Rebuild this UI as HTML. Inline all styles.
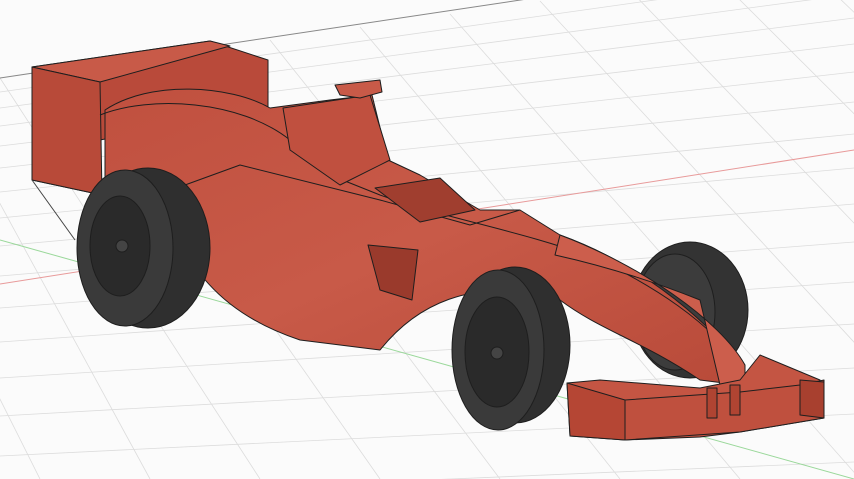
<!DOCTYPE html>
<html><head><style>
html,body{margin:0;padding:0;background:#fafafa;overflow:hidden;width:854px;height:479px}
svg{display:block}
</style></head><body>
<svg width="854" height="479" viewBox="0 0 854 479" xmlns="http://www.w3.org/2000/svg">
<defs>
<linearGradient id="bg" x1="0" y1="0" x2="1" y2="1">
<stop offset="0" stop-color="#c0503f"/><stop offset="0.5" stop-color="#c85a48"/><stop offset="1" stop-color="#b84a39"/>
</linearGradient>
</defs>
<rect width="854" height="479" fill="#fbfbfb"/>
<g stroke="#dcdcdc" stroke-width="0.8" fill="none">
<line x1="0" y1="92" x2="854" y2="-28"/>
<line x1="0" y1="108" x2="854" y2="-6"/>
<line x1="0" y1="126" x2="854" y2="18"/>
<line x1="0" y1="146" x2="854" y2="44"/>
<line x1="0" y1="168" x2="854" y2="72"/>
<line x1="0" y1="192" x2="854" y2="102"/>
<line x1="0" y1="218" x2="854" y2="134"/>
<line x1="0" y1="246" x2="854" y2="168"/>
<line x1="0" y1="276" x2="854" y2="204"/>
<line x1="0" y1="308" x2="854" y2="242"/>
<line x1="0" y1="342" x2="854" y2="282"/>
<line x1="0" y1="378" x2="854" y2="324"/>
<line x1="0" y1="416" x2="854" y2="368"/>
<line x1="0" y1="456" x2="854" y2="414"/>
<line x1="0" y1="498" x2="854" y2="462"/>
<line x1="-300" y1="0" x2="-60" y2="479"/>
<line x1="-200" y1="0" x2="40" y2="479"/>
<line x1="-100" y1="20" x2="150" y2="479"/>
<line x1="0" y1="78" x2="260" y2="479"/>
<line x1="90" y1="65" x2="380" y2="479"/>
<line x1="180" y1="52" x2="500" y2="479"/>
<line x1="270" y1="40" x2="620" y2="479"/>
<line x1="360" y1="27" x2="740" y2="479"/>
<line x1="450" y1="14" x2="860" y2="479"/>
<line x1="540" y1="1" x2="980" y2="479"/>
<line x1="630" y1="-10" x2="1100" y2="479"/>
<line x1="720" y1="-20" x2="1220" y2="479"/>
<line x1="810" y1="-30" x2="1340" y2="479"/>
</g>
<line x1="0" y1="78" x2="854" y2="-50" stroke="#888" stroke-width="1"/>
<line x1="0" y1="284" x2="854" y2="150" stroke="#e89a9a" stroke-width="1"/>
<line x1="0" y1="240" x2="854" y2="479" stroke="#9ad89a" stroke-width="1"/>

<g stroke="#1e1e1e" stroke-width="1" stroke-linejoin="round">
<!-- rear wing -->
<polygon points="32,67 210,41 268,60 268,108 100,140 102,195 32,180" fill="#b94a3a"/>
<polygon points="32,67 210,41 230,46 100,82" fill="#c85a48"/>
<polygon points="32,67 100,82 102,195 32,180" fill="#b84a39"/>
<line x1="32" y1="180" x2="75" y2="240" stroke="#444"/>
<!-- right far wheel -->
<ellipse cx="690" cy="310" rx="58" ry="68" fill="#333"/>
<ellipse cx="675" cy="312" rx="40" ry="58" fill="#3c3c3c"/>
<!-- body -->
<path d="M105,200 L105,110 C150,80 230,85 270,108 L330,100 L372,95 L388,160 L420,175 L480,210 L520,210 L560,235 C630,260 700,310 745,370 L740,385 L700,380 C640,340 600,330 560,300 L540,290 C470,285 420,300 380,350 L300,340 C240,320 210,290 190,260 C160,230 130,210 105,200 Z" fill="url(#bg)"/>
<path d="M100,115 C150,95 240,100 290,140 L330,175 L380,195 C450,220 520,230 600,260 C650,285 710,320 745,372" fill="none"/>
<path d="M130,205 L240,165 L380,200 L470,225 L520,210" fill="none"/>
<!-- halo/roll hoop -->
<polygon points="283,108 370,95 390,160 340,185 290,150" fill="#c0503f"/>
<polygon points="335,85 380,80 382,92 360,98 340,95" fill="#c85a48"/>
<!-- cockpit -->
<polygon points="375,188 440,178 475,210 420,222" fill="#a03e2f"/>
<!-- sidepod inlet -->
<polygon points="368,245 418,250 412,300 380,290" fill="#9a3a2c"/>
<!-- nose -->
<path d="M560,235 C640,265 720,320 745,365 L745,385 L720,385 L700,300 C650,280 600,265 555,255 Z" fill="#cc5e4c"/>
<!-- rear wheel -->
<ellipse cx="148" cy="248" rx="62" ry="80" fill="#2f2f2f"/>
<ellipse cx="125" cy="248" rx="48" ry="78" fill="#3a3a3a"/>
<ellipse cx="120" cy="246" rx="30" ry="50" fill="#2a2a2a"/>
<circle cx="122" cy="246" r="6" fill="#444"/>
<!-- front wheel -->
<ellipse cx="515" cy="345" rx="55" ry="78" fill="#2f2f2f"/>
<ellipse cx="498" cy="350" rx="46" ry="80" fill="#3a3a3a"/>
<ellipse cx="497" cy="352" rx="32" ry="55" fill="#2a2a2a"/>
<circle cx="497" cy="353" r="6" fill="#444"/>
<!-- front wing -->
<polygon points="567,383 600,380 700,388 740,380 760,355 820,380 824,418 740,432 700,437 625,440 570,436" fill="#c45543"/>
<polygon points="567,383 625,400 625,440 570,436" fill="#b54634"/>
<polygon points="625,400 740,392 800,385 824,380 824,418 740,432 625,440" fill="#bf503e"/>
<polygon points="800,380 824,382 824,418 800,415" fill="#a8402f"/>
<rect x="707" y="388" width="10" height="30" fill="#b04432"/>
<rect x="730" y="385" width="10" height="30" fill="#b04432"/>
</g>
</svg>
</body></html>
